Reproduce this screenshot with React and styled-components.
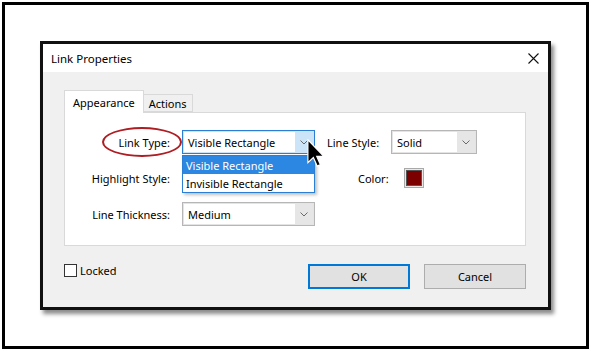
import styled, { createGlobalStyle } from 'styled-components';

const GlobalStyle = createGlobalStyle`
  body {
    margin: 0;
    background: #fff;
    font-family: "Noto Sans", "Liberation Sans", sans-serif;
    font-size: 11px;
    color: #000;
  }
`;

const Frame = styled.div`
  box-sizing: border-box;
  margin: 2px;
  width: 587px;
  height: 347px;
  border: 3px solid #000;
  padding: 36px 0 0 35px;
`;

const Dialog = styled.div`
  box-sizing: border-box;
  width: 511px;
  height: 269px;
  border: 3px solid #111;
  background: #f0f0f0;
  box-shadow: 3px 4px 4px rgba(0, 0, 0, 0.45);
  display: flex;
  flex-direction: column;
`;

const TitleBar = styled.div`
  height: 28px;
  background: #fff;
  display: flex;
  align-items: center;
  justify-content: space-between;
  padding: 0 9px 0 8px;
  font-size: 11.5px;
`;

const Body = styled.div`
  padding: 18px 22px 0 21px;
  display: flex;
  flex-direction: column;
`;

const TabStrip = styled.div`
  display: flex;
  align-items: flex-end;
  height: 22px;
`;

const Tab = styled.div`
  box-sizing: border-box;
  height: ${(p) => (p.$active ? 23 : 18)}px;
  margin-bottom: ${(p) => (p.$active ? -1 : 0)}px;
  padding: 0 ${(p) => (p.$active ? 8 : 5)}px;
  display: flex;
  align-items: center;
  background: ${(p) => (p.$active ? '#fff' : '#f0f0f0')};
  border: 1px solid #d9d9d9;
  border-bottom: ${(p) => (p.$active ? 'none' : '1px solid #d9d9d9')};
  border-left: ${(p) => (p.$active ? '1px solid #d9d9d9' : 'none')};
  position: relative;
  z-index: ${(p) => (p.$active ? 1 : 0)};
`;

const Panel = styled.div`
  box-sizing: border-box;
  height: 134px;
  background: #fff;
  border: 1px solid #d9d9d9;
  padding-top: 17px;
`;

const FieldGrid = styled.div`
  display: grid;
  grid-template-columns: 105px 133px 52px 86px;
  grid-auto-rows: 24px;
  column-gap: 12px;
  row-gap: 12px;
`;

const Label = styled.div`
  display: flex;
  align-items: center;
  justify-content: ${(p) => (p.$left ? 'flex-start' : 'flex-end')};
  white-space: nowrap;
  position: relative;
`;

const Ring = styled.div`
  position: absolute;
  left: 37px;
  right: -12px;
  top: -3px;
  bottom: -3px;
  border: 2px solid #ae1d22;
  border-radius: 50%;
`;

const SelectWrap = styled.div`
  position: relative;
`;

const Select = styled.div`
  box-sizing: border-box;
  height: 24px;
  display: flex;
  border: 1px solid ${(p) => (p.$focus ? '#2a7fd4' : '#b6b6b6')};
  box-shadow: inset 0 0 0 1px ${(p) => (p.$focus ? '#cfe3f7' : '#e4e4e4')};
  background: #fff;
`;

const SelectValue = styled.div`
  flex: 1;
  display: flex;
  align-items: center;
  padding-left: 5px;
  white-space: nowrap;
`;

const SelectArrow = styled.div`
  width: 18px;
  margin: 1px 1px 1px 0;
  display: flex;
  align-items: center;
  justify-content: center;
  background: ${(p) => (p.$focus ? '#cce4f7' : '#e6e6e6')};
`;

const DropList = styled.div`
  position: absolute;
  top: 25px;
  left: 0;
  right: 0;
  box-sizing: border-box;
  border: 1px solid #2a7fd4;
  background: #fff;
  box-shadow: 2px 2px 3px rgba(0, 0, 0, 0.25);
  z-index: 2;
`;

const DropItem = styled.div`
  height: 18px;
  display: flex;
  align-items: center;
  padding-left: 3px;
  background: ${(p) => (p.$selected ? '#2b87e2' : '#fff')};
  color: ${(p) => (p.$selected ? '#fff' : '#000')};
`;

const Cursor = styled.svg`
  position: absolute;
  left: 125px;
  top: 9px;
  z-index: 3;
`;

const ColorCell = styled.div`
  grid-column: 3 / span 2;
  display: flex;
  align-items: center;
  gap: 15px;
  padding-left: 31px;
`;

const Swatch = styled.div`
  box-sizing: border-box;
  width: 20px;
  height: 20px;
  border: 1px solid #a9a9a9;
  padding: 2px;
  background: #e9e9e9;
  &::after {
    content: '';
    display: block;
    width: 100%;
    height: 100%;
    background: #7d0000;
    box-shadow: 0 0 0 1px #555;
  }
`;

const Footer = styled.div`
  margin-top: 18px;
  display: flex;
  align-items: flex-start;
  justify-content: space-between;
`;

const CheckRow = styled.label`
  display: flex;
  align-items: center;
  gap: 3px;
  margin-top: -1px;
`;

const CheckBox = styled.span`
  box-sizing: border-box;
  width: 13px;
  height: 13px;
  border: 1px solid #333;
  background: #fff;
`;

const Buttons = styled.div`
  display: flex;
  gap: 14px;
`;

const Button = styled.button`
  box-sizing: border-box;
  width: 102px;
  height: 25px;
  font: inherit;
  color: #000;
  background: #e1e1e1;
  border: ${(p) => (p.$default ? '2px solid #0078d7' : '1px solid #adadad')};
  padding: 0;
`;

const Chevron = () => (
  <svg width="8" height="5" viewBox="0 0 8 5">
    <path d="M0.5 0.5 L4 4 L7.5 0.5" fill="none" stroke="#6a6a6a" strokeWidth="1" />
  </svg>
);

const Combo = ({ value, focus }) => (
  <Select $focus={focus}>
    <SelectValue>{value}</SelectValue>
    <SelectArrow $focus={focus}>
      <Chevron />
    </SelectArrow>
  </Select>
);

export default function App() {
  return (
    <>
      <GlobalStyle />
      <Frame>
        <Dialog>
          <TitleBar>
            <span>Link Properties</span>
            <svg width="11" height="11" viewBox="0 0 11 11">
              <path d="M0.5 0.5 L10.5 10.5 M10.5 0.5 L0.5 10.5" stroke="#111" strokeWidth="1.1" />
            </svg>
          </TitleBar>
          <Body>
            <TabStrip>
              <Tab $active>Appearance</Tab>
              <Tab>Actions</Tab>
            </TabStrip>
            <Panel>
              <FieldGrid>
                <Label>
                  Link Type:
                  <Ring />
                </Label>
                <SelectWrap>
                  <Combo value="Visible Rectangle" focus />
                  <DropList>
                    <DropItem $selected>Visible Rectangle</DropItem>
                    <DropItem>Invisible Rectangle</DropItem>
                  </DropList>
                  <Cursor width="18" height="28" viewBox="0 0 12 19">
                    <path
                      d="M0.5 0.5 L0.5 16 L4.2 12.6 L6.8 18.4 L9 17.4 L6.5 11.8 L11.3 11.8 Z"
                      fill="#000"
                      stroke="#fff"
                      strokeWidth="0.8"
                      strokeLinejoin="miter"
                    />
                  </Cursor>
                </SelectWrap>
                <Label $left>Line Style:</Label>
                <Combo value="Solid" />

                <Label>Highlight Style:</Label>
                <Combo value="" />
                <ColorCell>
                  <span>Color:</span>
                  <Swatch />
                </ColorCell>

                <Label>Line Thickness:</Label>
                <Combo value="Medium" />
              </FieldGrid>
            </Panel>
            <Footer>
              <CheckRow>
                <CheckBox />
                Locked
              </CheckRow>
              <Buttons>
                <Button $default>OK</Button>
                <Button>Cancel</Button>
              </Buttons>
            </Footer>
          </Body>
        </Dialog>
      </Frame>
    </>
  );
}
